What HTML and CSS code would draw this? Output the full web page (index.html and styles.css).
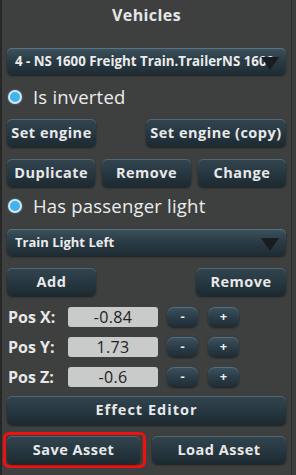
FILE: index.html
```html
<!DOCTYPE html>
<html>
<head>
<meta charset="utf-8">
<link rel="stylesheet" href="styles.css">
</head>
<body>
<div class="panel">
  <div class="title">Vehicles</div>
  <div class="dropdown first"><span class="dd-text">4 - NS 1600 Freight Train.TrailerNS 1600</span><span class="arrow"></span></div>
  <div class="radio-row r1"><span class="radio"></span><span class="radio-label">Is inverted</span></div>
  <div class="row two">
    <div class="btn w88">Set engine</div>
    <div class="btn w140">Set engine (copy)</div>
  </div>
  <div class="row three">
    <div class="btn">Duplicate</div>
    <div class="btn">Remove</div>
    <div class="btn">Change</div>
  </div>
  <div class="radio-row r2"><span class="radio"></span><span class="radio-label">Has passenger light</span></div>
  <div class="dropdown second"><span class="dd-text">Train Light Left</span><span class="arrow"></span></div>
  <div class="row two r-add">
    <div class="btn w89">Add</div>
    <div class="btn w90">Remove</div>
  </div>
  <div class="pos">
    <div class="pos-row"><span class="pos-label">Pos X:</span><span class="field">-0.84</span><span class="small-btn">-</span><span class="small-btn">+</span></div>
    <div class="pos-row"><span class="pos-label">Pos Y:</span><span class="field">1.73</span><span class="small-btn">-</span><span class="small-btn">+</span></div>
    <div class="pos-row"><span class="pos-label">Pos Z:</span><span class="field">-0.6</span><span class="small-btn">-</span><span class="small-btn">+</span></div>
  </div>
  <div class="btn full effect">Effect Editor</div>
  <div class="row bottom">
    <div class="highlight"><div class="btn save">Save Asset</div></div>
    <div class="btn load">Load Asset</div>
  </div>
</div>
</body>
</html>
```
FILE: styles.css
```css
html, body {
  margin: 0;
  padding: 0;
  background: #3a3d3c;
}
body {
  width: 296px;
  height: 475px;
  overflow: hidden;
  font-family: "Open Sans", "DejaVu Sans", sans-serif;
  color: #ebebeb;
}
.panel {
  box-sizing: border-box;
  width: 292px;
  height: 475px;
  background: #3d403f;
  border-left: 2px solid #262827;
  border-right: 1px solid #2a2c2b;
  padding: 0 5px 0 5px;
  display: flex;
  flex-direction: column;
}
.title {
  height: 30px;
  line-height: 30px;
  text-align: center;
  font-weight: 700;
  font-size: 16px;
  letter-spacing: 0.4px;
  color: #e6e6e6;
}
.btn {
  box-sizing: border-box;
  height: 28px;
  border-radius: 5px;
  background: linear-gradient(#32454f 0%, #283943 45%, #1c2930 100%);
  box-shadow: inset 0 1px 0 rgba(140,170,185,0.35), 0 1px 2px rgba(0,0,0,0.5);
  font-weight: 700;
  font-size: 14.5px;
  text-align: center;
  line-height: 27px;
  color: #e8e8e8;
  white-space: nowrap;
  letter-spacing: 0.5px;
}
.dropdown {
  box-sizing: border-box;
  height: 27px;
  border-radius: 5px;
  background: linear-gradient(#3c525d 0%, #2a3c46 45%, #1e2b33 100%);
  box-shadow: inset 0 1px 0 rgba(150,180,195,0.35), 0 1px 2px rgba(0,0,0,0.5);
  position: relative;
  padding-left: 8px;
  font-weight: 700;
  font-size: 13.3px;
  line-height: 27px;
  white-space: nowrap;
  overflow: hidden;
}
.dd-text {
  display: block;
}
.first { margin-top: 18px; }
.second { margin-top: 12px; font-size: 13px; }
.arrow {
  position: absolute;
  right: 7px;
  top: 9px;
  width: 0;
  height: 0;
  border-left: 9px solid transparent;
  border-right: 9px solid transparent;
  border-top: 13px solid #191d20;
}
.radio-row {
  display: flex;
  align-items: center;
  height: 22px;
}
.r1 { margin-top: 11px; }
.r2 { margin-top: 8px; }
.radio {
  width: 10px;
  height: 10px;
  border-radius: 50%;
  background: #3fb4f0;
  border: 2px solid #d8e4ea;
  margin-left: 1px;
  margin-right: 11px;
  box-shadow: 0 0 2px rgba(80,180,240,0.8);
}
.radio-label {
  font-size: 18.5px;
  color: #ececec;
  letter-spacing: 0.2px;
  line-height: 22px;
}
.row {
  display: flex;
  margin-top: 11px;
}
.row.two { justify-content: space-between; }
.w88 { width: 89px; }
.w140 { width: 140px; }
.w89 { width: 89px; }
.w90 { width: 90px; }
.row.three { margin-top: 12px; gap: 7px; }
.row.three .btn { flex: 1; }
.r-add { margin-top: 12px; }
.pos {
  margin-top: 10px;
  display: flex;
  flex-direction: column;
  gap: 9px;
}
.pos-row {
  display: flex;
  align-items: center;
  height: 21px;
}
.pos-label {
  width: 60px;
  padding-left: 1px;
  font-weight: 700;
  font-size: 16px;
  color: #e8e8e8;
}
.field {
  box-sizing: border-box;
  width: 90px;
  height: 20px;
  border-radius: 3px;
  background: #c9cbca;
  color: #222;
  text-align: center;
  font-size: 16px;
  line-height: 20px;
  margin-right: 9px;
  letter-spacing: 0.3px;
}
.small-btn {
  box-sizing: border-box;
  width: 31px;
  height: 20px;
  border-radius: 7px;
  background: linear-gradient(#3c5260 0%, #2b3d48 50%, #1f2c34 100%);
  box-shadow: inset 0 1px 0 rgba(150,180,195,0.3), 0 1px 2px rgba(0,0,0,0.5);
  color: #f0f0f0;
  font-weight: 700;
  font-size: 13px;
  text-align: center;
  line-height: 18px;
  margin-right: 10px;
}
.full { width: 100%; }
.effect { margin-top: 9px; height: 29px; line-height: 28px; letter-spacing: 1px; }
.bottom {
  margin-top: 7px;
  justify-content: space-between;
  align-items: center;
}
.highlight {
  box-sizing: border-box;
  width: 143px;
  height: 36px;
  margin-left: -4px;
  border: 3px solid #f01010;
  border-radius: 6px;
  padding: 1px 2px 1px 1px;
}
.save { width: 133px; height: 28px; }
.load { width: 134px; margin-top: 0; }
```
